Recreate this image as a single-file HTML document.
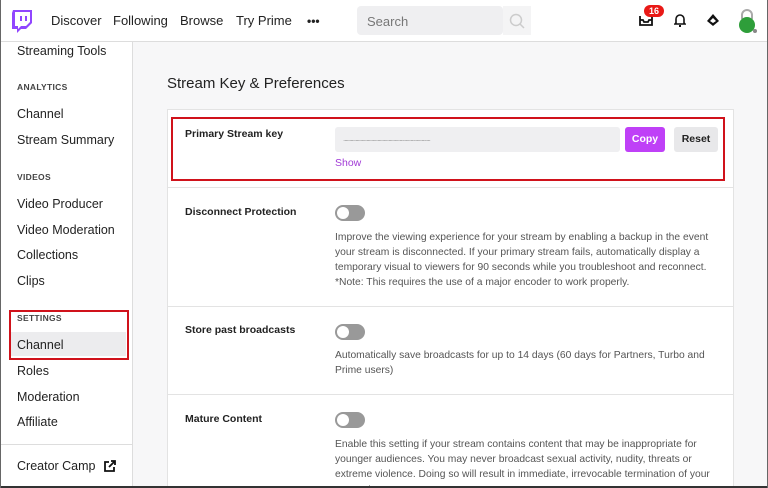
<!DOCTYPE html>
<html><head><style>
*{box-sizing:border-box;margin:0;padding:0}
html,body{width:768px;height:488px;overflow:hidden}
body{font-family:"Liberation Sans",sans-serif;background:#f7f7f8;color:#0e0e10}
#w{position:relative;width:768px;height:488px;overflow:hidden;background:#f7f7f8}
.top{position:absolute;left:0;top:0;width:768px;height:42px;background:#fff;border-bottom:1px solid #ddd}
.nav{position:absolute;top:13px;font-size:13px;color:#222}
.side{position:absolute;left:0;top:42px;width:133px;height:444px;background:#fff;border-right:1px solid #ddd}
.si{position:absolute;left:17px;font-size:12.5px;color:#222}
.sh{position:absolute;left:17px;font-size:8.5px;font-weight:bold;color:#444;letter-spacing:.3px}
.card{position:absolute;left:167px;top:109px;width:567px;height:377px;background:#fff;border:1px solid #e3e3e3;border-bottom:0;overflow:hidden}
.row{position:absolute;left:0;width:565px;border-bottom:1px solid #e3e3e3}
.lbl{position:absolute;left:17px;font-size:10.5px;font-weight:bold;color:#222}
.tog{position:absolute;left:167px;width:30px;height:16px;border-radius:8px;background:#999}
.tog:after{content:"";position:absolute;left:2px;top:2px;width:12px;height:12px;border-radius:50%;background:#fff}
.desc{position:absolute;left:167px;width:384px;font-size:10.3px;line-height:15px;color:#555}
.red{position:absolute;border:2px solid #d0121b}
</style></head><body><div id="w">
<div class="top">
<svg style="position:absolute;left:11px;top:10px" width="21" height="24" viewBox="0 0 21 24"><path d="M2 0h19v13l-6 6h-5l-4 4v-4H1V3z" fill="#9146ff"/><path d="M4 2h15v10l-4 4h-5l-3 3v-3H4z" fill="#fff"/><rect x="9" y="6" width="2" height="5" fill="#9146ff"/><rect x="14" y="6" width="2" height="5" fill="#9146ff"/></svg>
<span class="nav" style="left:51px">Discover</span>
<span class="nav" style="left:113px">Following</span>
<span class="nav" style="left:180px">Browse</span>
<span class="nav" style="left:236px">Try Prime</span>
<span class="nav" style="left:307px;font-weight:bold;top:14px;font-size:12px">•••</span>
<div style="position:absolute;left:357px;top:6px;width:146px;height:29px;background:#efeff1;border-radius:4px;font-size:13px;color:#777;padding:8px 10px">Search</div>
<div style="position:absolute;left:503px;top:6px;width:28px;height:29px;background:#f4f4f5"></div>
<svg style="position:absolute;left:509px;top:13px" width="16" height="16"><circle cx="7" cy="7" r="5.5" fill="none" stroke="#ccc" stroke-width="1.5"/><path d="M11 11l4 4" stroke="#ccc" stroke-width="1.5"/></svg>
<svg style="position:absolute;left:639px;top:14px" width="14" height="12"><path d="M1 2v9h12V2M1 6h3l1 2h4l1-2h3" fill="none" stroke="#111" stroke-width="1.8"/></svg>
<div style="position:absolute;left:644px;top:5px;width:20px;height:12px;background:#e91916;border-radius:6px;color:#fff;font-size:9px;font-weight:bold;text-align:center;line-height:12px">16</div>
<svg style="position:absolute;left:674px;top:13px" width="12" height="14"><path d="M2 10V6a4 4 0 018 0v4l1 1H1z" fill="none" stroke="#111" stroke-width="1.6"/><rect x="5" y="12" width="2" height="2" fill="#111"/></svg>
<svg style="position:absolute;left:706px;top:13px" width="14" height="14"><path d="M7 1l6 7-6 5-6-5z" fill="#111"/><path d="M7 5l3 3-3 2-3-2z" fill="#fff"/></svg>
<svg style="position:absolute;left:737px;top:8px" width="20" height="26"><path d="M5 11V7a5 5 0 0110 0v4" fill="none" stroke="#aaa" stroke-width="2"/><circle cx="10" cy="17" r="8" fill="#2e9e3a"/><circle cx="18" cy="23" r="2" fill="#888"/></svg>
</div>
<div class="side">
<span class="si" style="top:2px">Streaming Tools</span>
<span class="sh" style="top:40px">ANALYTICS</span>
<span class="si" style="top:65px">Channel</span>
<span class="si" style="top:91px">Stream Summary</span>
<span class="sh" style="top:130px">VIDEOS</span>
<span class="si" style="top:155px">Video Producer</span>
<span class="si" style="top:181px">Video Moderation</span>
<span class="si" style="top:206px">Collections</span>
<span class="si" style="top:232px">Clips</span>
<span class="sh" style="top:271px">SETTINGS</span>
<div style="position:absolute;left:10px;top:290px;width:116px;height:24px;background:#ececee"></div>
<span class="si" style="top:296px">Channel</span>
<span class="si" style="top:322px">Roles</span>
<span class="si" style="top:348px">Moderation</span>
<span class="si" style="top:373px">Affiliate</span>
<div style="position:absolute;left:0;top:402px;width:132px;border-top:1px solid #ddd"></div>
<span class="si" style="top:417px">Creator Camp</span>
<svg style="position:absolute;left:104px;top:418px" width="12" height="12"><path d="M5 2H1v9h9V7M7 1h4v4M11 1L5 7" fill="none" stroke="#111" stroke-width="1.8"/></svg>
</div>
<div style="position:absolute;left:167px;top:75px;font-size:15px;color:#222">Stream Key &amp; Preferences</div>
<div class="card">
<div class="row" style="top:0;height:78px">
<span class="lbl" style="top:18px">Primary Stream key</span>
<div style="position:absolute;left:167px;top:17px;width:285px;height:25px;background:#efeff1;border-radius:3px;font-size:8px;color:#999;padding:7px 8px;letter-spacing:-1px">.......................................................................</div>
<div style="position:absolute;left:457px;top:17px;width:40px;height:25px;background:#bf40f7;border-radius:3px;color:#fff;font-size:10.5px;font-weight:bold;text-align:center;line-height:25px">Copy</div>
<div style="position:absolute;left:506px;top:17px;width:44px;height:25px;background:#e8e8ea;border-radius:3px;color:#222;font-size:10.5px;font-weight:bold;text-align:center;line-height:25px">Reset</div>
<span style="position:absolute;left:167px;top:47px;font-size:10.5px;color:#a13ad6">Show</span>
</div>
<div class="row" style="top:78px;height:119px">
<span class="lbl" style="top:18px">Disconnect Protection</span>
<div class="tog" style="top:17px"></div>
<div class="desc" style="top:42px">Improve the viewing experience for your stream by enabling a backup in the event your stream is disconnected. If your primary stream fails, automatically display a temporary visual to viewers for 90 seconds while you troubleshoot and reconnect. *Note: This requires the use of a major encoder to work properly.</div>
</div>
<div class="row" style="top:197px;height:88px">
<span class="lbl" style="top:17px">Store past broadcasts</span>
<div class="tog" style="top:17px"></div>
<div class="desc" style="top:41px">Automatically save broadcasts for up to 14 days (60 days for Partners, Turbo and Prime users)</div>
</div>
<div class="row" style="top:285px;height:92px;border:0;overflow:hidden">
<span class="lbl" style="top:18px">Mature Content</span>
<div class="tog" style="top:17px"></div>
<div class="desc" style="top:42px">Enable this setting if your stream contains content that may be inappropriate for younger audiences. You may never broadcast sexual activity, nudity, threats or extreme violence. Doing so will result in immediate, irrevocable termination of your account.</div>
</div>
</div>
<div class="red" style="left:171px;top:117px;width:554px;height:64px"></div>
<div class="red" style="left:9px;top:310px;width:120px;height:50px"></div>
<div style="position:absolute;left:0;top:486px;width:768px;height:2px;background:#333"></div>
<div style="position:absolute;left:0;top:0;width:1px;height:488px;background:#666"></div>
<div style="position:absolute;right:0;top:0;width:1px;height:488px;background:#666"></div>
</div></body></html>
